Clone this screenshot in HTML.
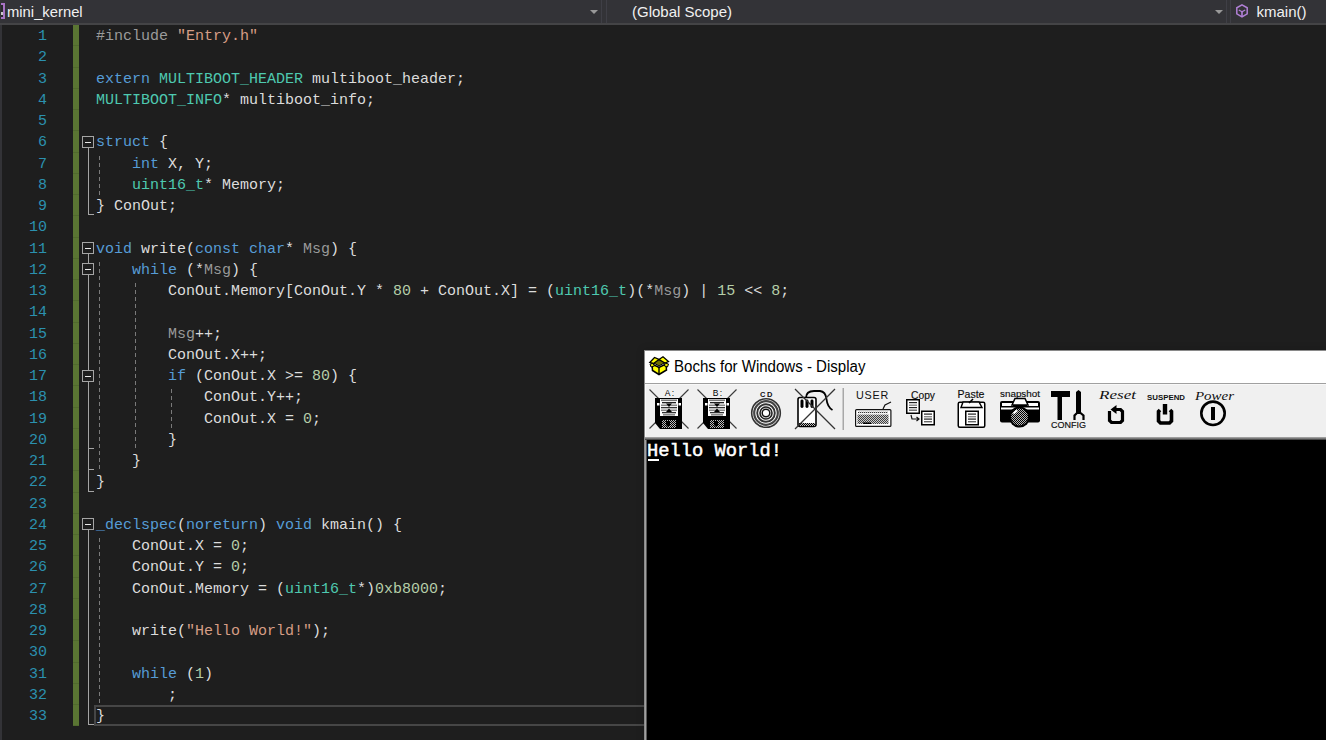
<!DOCTYPE html>
<html><head><meta charset="utf-8"><style>
*{margin:0;padding:0;box-sizing:border-box}
html,body{width:1326px;height:740px;overflow:hidden;background:#1e1e1e;position:relative}
.hdr{position:absolute;left:0;top:0;width:1326px;height:25px;background:#333337;border-bottom:2px solid #444446}
.dd{position:absolute;top:0;height:23px;border-right:1px solid #3f3f46;border-left:1px solid #3f3f46;font-family:"Liberation Sans",sans-serif;font-size:15px;color:#f1f1f1;line-height:23px;white-space:nowrap}
.arr{position:absolute;top:10px;width:0;height:0;border-left:4px solid transparent;border-right:4px solid transparent;border-top:4px solid #999}
.strip{position:absolute;left:0;top:25px;width:2px;height:715px;background:#333337}
.ln{position:absolute;left:0;width:47px;margin-top:1px;text-align:right;font-family:"Liberation Mono",monospace;font-size:15px;line-height:21.25px;color:#2b91af;white-space:pre}
.cl{position:absolute;left:96px;margin-top:1px;font-family:"Liberation Mono",monospace;font-size:15px;line-height:21.25px;color:#dcdcdc;white-space:pre}
.k{color:#569cd6}.t{color:#4ec9b0}.s{color:#d69d85}.n{color:#b5cea8}.p{color:#9a9a9a}.pp{color:#9b9b9b}
.gb{position:absolute;left:73px;width:6px;background:#5a7533;border-bottom:1px solid #516a2e}
.fb{position:absolute;z-index:2;left:82px;width:12px;height:12px;border:1px solid #a5a5a5;background:#1e1e1e}
.fb::after{content:"";position:absolute;left:2px;top:4.5px;width:6px;height:1.5px;background:#e8e8e8}
.ov{position:absolute;left:88px;width:1px;background:#a5a5a5}
.oh{position:absolute;left:88px;width:6px;height:1px;background:#a5a5a5}
.dg{position:absolute;width:1px;background:repeating-linear-gradient(to bottom,#7a7a7a 0 4px,transparent 4px 7px)}
.cur{position:absolute;left:94px;top:705px;width:600px;height:21px;border:2px solid #464646}
</style></head>
<body>

<div class="hdr"></div>
<div class="dd" style="left:-1px;width:603px"><span style="position:absolute;left:1px;top:3px;width:4px;height:16px;border:2px solid #a873c4;border-left:none;background:#2a2a2d"></span><span style="position:absolute;left:1px;top:12px;width:2px;height:3px;background:#c8c8c8"></span><span style="position:absolute;left:7px;top:1px;font-size:14.8px">mini_kernel</span><div class="arr" style="left:590px"></div></div>
<div class="dd" style="left:606px;width:621px"><span style="position:absolute;left:25px;top:0px">(Global Scope)</span><div class="arr" style="left:608px"></div></div>
<div class="dd" style="left:1230px;width:100px;border-right:none"><span style="position:absolute;left:25.5px;top:0px">kmain()</span><svg width="16" height="16" style="position:absolute;left:3.5px;top:3px" viewBox="0 0 16 16"><polygon points="7,1.8 12.2,4.8 12.2,10.8 7,13.8 1.8,10.8 1.8,4.8" fill="none" stroke="#b180d7" stroke-width="1.5"/><polyline points="3.8,7 7,8.8 10.2,7" fill="none" stroke="#b180d7" stroke-width="1.3"/><line x1="7" y1="8.6" x2="7" y2="13.5" stroke="#b180d7" stroke-width="1.6"/></svg></div>
<div class="strip"></div>

<div class="cur"></div>
<div class="ln" style="top:25.0px">1</div>
<div class="cl" style="top:25.0px"><span class="pp">#include</span> <span class="s">&quot;Entry.h&quot;</span></div>
<div class="ln" style="top:46.25px">2</div>
<div class="ln" style="top:67.5px">3</div>
<div class="cl" style="top:67.5px"><span class="k">extern</span> <span class="t">MULTIBOOT_HEADER</span> multiboot_header;</div>
<div class="ln" style="top:88.75px">4</div>
<div class="cl" style="top:88.75px"><span class="t">MULTIBOOT_INFO</span>* multiboot_info;</div>
<div class="ln" style="top:110.0px">5</div>
<div class="ln" style="top:131.25px">6</div>
<div class="cl" style="top:131.25px"><span class="k">struct</span> {</div>
<div class="ln" style="top:152.5px">7</div>
<div class="cl" style="top:152.5px">    <span class="k">int</span> X, Y;</div>
<div class="ln" style="top:173.75px">8</div>
<div class="cl" style="top:173.75px">    <span class="t">uint16_t</span>* Memory;</div>
<div class="ln" style="top:195.0px">9</div>
<div class="cl" style="top:195.0px">} ConOut;</div>
<div class="ln" style="top:216.25px">10</div>
<div class="ln" style="top:237.5px">11</div>
<div class="cl" style="top:237.5px"><span class="k">void</span> write(<span class="k">const</span> <span class="k">char</span>* <span class="p">Msg</span>) {</div>
<div class="ln" style="top:258.75px">12</div>
<div class="cl" style="top:258.75px">    <span class="k">while</span> (*<span class="p">Msg</span>) {</div>
<div class="ln" style="top:280.0px">13</div>
<div class="cl" style="top:280.0px">        ConOut.Memory[ConOut.Y * <span class="n">80</span> + ConOut.X] = (<span class="t">uint16_t</span>)(*<span class="p">Msg</span>) | <span class="n">15</span> &lt;&lt; <span class="n">8</span>;</div>
<div class="ln" style="top:301.25px">14</div>
<div class="ln" style="top:322.5px">15</div>
<div class="cl" style="top:322.5px">        <span class="p">Msg</span>++;</div>
<div class="ln" style="top:343.75px">16</div>
<div class="cl" style="top:343.75px">        ConOut.X++;</div>
<div class="ln" style="top:365.0px">17</div>
<div class="cl" style="top:365.0px">        <span class="k">if</span> (ConOut.X &gt;= <span class="n">80</span>) {</div>
<div class="ln" style="top:386.25px">18</div>
<div class="cl" style="top:386.25px">            ConOut.Y++;</div>
<div class="ln" style="top:407.5px">19</div>
<div class="cl" style="top:407.5px">            ConOut.X = <span class="n">0</span>;</div>
<div class="ln" style="top:428.75px">20</div>
<div class="cl" style="top:428.75px">        }</div>
<div class="ln" style="top:450.0px">21</div>
<div class="cl" style="top:450.0px">    }</div>
<div class="ln" style="top:471.25px">22</div>
<div class="cl" style="top:471.25px">}</div>
<div class="ln" style="top:492.5px">23</div>
<div class="ln" style="top:513.75px">24</div>
<div class="cl" style="top:513.75px"><span class="k">_declspec</span>(<span class="k">noreturn</span>) <span class="k">void</span> kmain() {</div>
<div class="ln" style="top:535.0px">25</div>
<div class="cl" style="top:535.0px">    ConOut.X = <span class="n">0</span>;</div>
<div class="ln" style="top:556.25px">26</div>
<div class="cl" style="top:556.25px">    ConOut.Y = <span class="n">0</span>;</div>
<div class="ln" style="top:577.5px">27</div>
<div class="cl" style="top:577.5px">    ConOut.Memory = (<span class="t">uint16_t</span>*)<span class="n">0xb8000</span>;</div>
<div class="ln" style="top:598.75px">28</div>
<div class="ln" style="top:620.0px">29</div>
<div class="cl" style="top:620.0px">    write(<span class="s">&quot;Hello World!&quot;</span>);</div>
<div class="ln" style="top:641.25px">30</div>
<div class="ln" style="top:662.5px">31</div>
<div class="cl" style="top:662.5px">    <span class="k">while</span> (<span class="n">1</span>)</div>
<div class="ln" style="top:683.75px">32</div>
<div class="cl" style="top:683.75px">        ;</div>
<div class="ln" style="top:705.0px">33</div>
<div class="cl" style="top:705.0px">}</div>
<div class="gb" style="top:25.0px;height:21.25px"></div>
<div class="gb" style="top:46.25px;height:21.25px"></div>
<div class="gb" style="top:67.5px;height:21.25px"></div>
<div class="gb" style="top:88.75px;height:21.25px"></div>
<div class="gb" style="top:110.0px;height:21.25px"></div>
<div class="gb" style="top:131.25px;height:21.25px"></div>
<div class="gb" style="top:152.5px;height:21.25px"></div>
<div class="gb" style="top:173.75px;height:21.25px"></div>
<div class="gb" style="top:195.0px;height:21.25px"></div>
<div class="gb" style="top:216.25px;height:21.25px"></div>
<div class="gb" style="top:237.5px;height:21.25px"></div>
<div class="gb" style="top:258.75px;height:21.25px"></div>
<div class="gb" style="top:280.0px;height:21.25px"></div>
<div class="gb" style="top:301.25px;height:21.25px"></div>
<div class="gb" style="top:322.5px;height:21.25px"></div>
<div class="gb" style="top:343.75px;height:21.25px"></div>
<div class="gb" style="top:365.0px;height:21.25px"></div>
<div class="gb" style="top:386.25px;height:21.25px"></div>
<div class="gb" style="top:407.5px;height:21.25px"></div>
<div class="gb" style="top:428.75px;height:21.25px"></div>
<div class="gb" style="top:450.0px;height:21.25px"></div>
<div class="gb" style="top:471.25px;height:21.25px"></div>
<div class="gb" style="top:492.5px;height:21.25px"></div>
<div class="gb" style="top:513.75px;height:21.25px"></div>
<div class="gb" style="top:535.0px;height:21.25px"></div>
<div class="gb" style="top:556.25px;height:21.25px"></div>
<div class="gb" style="top:577.5px;height:21.25px"></div>
<div class="gb" style="top:598.75px;height:21.25px"></div>
<div class="gb" style="top:620.0px;height:21.25px"></div>
<div class="gb" style="top:641.25px;height:21.25px"></div>
<div class="gb" style="top:662.5px;height:21.25px"></div>
<div class="gb" style="top:683.75px;height:21.25px"></div>
<div class="gb" style="top:705.0px;height:21.25px"></div>
<div class="fb" style="top:136px"></div>
<div class="fb" style="top:242px"></div>
<div class="fb" style="top:263px"></div>
<div class="fb" style="top:370px"></div>
<div class="fb" style="top:518px"></div>
<div class="ov" style="top:148px;height:67px"></div>
<div class="oh" style="top:214px"></div>
<div class="ov" style="top:254px;height:238px"></div>
<div class="oh" style="top:491px"></div>
<div class="ov" style="top:275px;height:195px"></div>
<div class="oh" style="top:469px"></div>
<div class="ov" style="top:382px;height:67px"></div>
<div class="oh" style="top:448px"></div>
<div class="ov" style="top:530px;height:195px"></div>
<div class="oh" style="top:724px"></div>
<div class="dg" style="left:99px;top:155.5px;height:39.5px"></div>
<div class="dg" style="left:99px;top:261.75px;height:209.5px"></div>
<div class="dg" style="left:135px;top:283.0px;height:167.0px"></div>
<div class="dg" style="left:171px;top:389.25px;height:39.5px"></div>
<div class="dg" style="left:99px;top:538.0px;height:167.0px"></div>

<div style="position:absolute;left:644px;top:350px;width:700px;height:400px;background:#fff;border-left:1px solid #8a8a8a;border-top:1px solid #8a8a8a;box-shadow:0 0 8px rgba(0,0,0,0.18)"></div>
<div style="position:absolute;left:674px;top:357px;font-family:'Liberation Sans',sans-serif;font-size:16px;line-height:20px;transform:scaleX(0.94);transform-origin:0 0;color:#000;white-space:nowrap">Bochs for Windows - Display</div>
<div style="position:absolute;left:645px;top:383px;width:690px;height:1px;background:#a0a0a0"></div>
<div style="position:absolute;left:645px;top:384px;width:690px;height:54px;background:#f0f0f0;border-top:1px solid #f8f8f8;border-left:1px solid #fbfbfb"></div>
<div style="position:absolute;left:645px;top:437px;width:690px;height:3px;background:linear-gradient(#b0b0b0,#707070 60%,#303030)"></div>
<div style="position:absolute;left:645px;top:440px;width:690px;height:310px;background:#000;border-left:1px solid #a0a0a0"></div>
<div style="position:absolute;left:646px;top:440px;width:1px;height:310px;background:#555"></div>
<div style="position:absolute;left:647px;top:441px;font-family:'Liberation Mono',monospace;font-size:18.75px;line-height:20px;color:#fff;-webkit-text-stroke:0.5px #fff;white-space:pre">Hello World!</div>
<div style="position:absolute;left:648px;top:459px;width:11px;height:2px;background:#fff"></div>
<svg width="1326" height="740" style="position:absolute;left:0;top:0"><defs><pattern id="chk" width="2" height="2" patternUnits="userSpaceOnUse"><rect width="1" height="1" fill="#000"/><rect x="1" y="1" width="1" height="1" fill="#000"/><rect x="1" y="0" width="1" height="1" fill="#bbb"/><rect x="0" y="1" width="1" height="1" fill="#bbb"/></pattern></defs><g transform="translate(649,356)"><polygon points="3,8 10,11.5 17,8 17.5,14 10,18.5 3.5,14.5" fill="#ffff00" stroke="#000" stroke-width="1.5"/><line x1="10" y1="11.5" x2="10" y2="18.5" stroke="#000" stroke-width="1.4"/><polygon points="4,6.5 10,3.5 16,6.5 10,10" fill="#6e6e00" stroke="#000" stroke-width="1"/><polygon points="0.8,6.5 5.5,1.5 10,3.5 4.5,7.5" fill="#ffff00" stroke="#000" stroke-width="1.3"/><polygon points="10,3.5 14,0.8 19.5,5.5 16,7" fill="#ffff00" stroke="#000" stroke-width="1.3"/><polygon points="1,8 4,7.5 5.5,10 2,11" fill="#e8e800" stroke="#000" stroke-width="1"/><polygon points="16,7 19.5,8 18.5,11 15.5,10" fill="#e8e800" stroke="#000" stroke-width="1"/></g><g transform="translate(649,389)"><line x1="0.5" y1="0.5" x2="39.5" y2="39.5" stroke="#3a3a3a" stroke-width="1.1"/><line x1="39.5" y1="0.5" x2="0.5" y2="39.5" stroke="#3a3a3a" stroke-width="1.1"/><polygon points="6,9 33,9 33,40 11,40 6,34" fill="#000"/><rect x="11" y="10" width="18" height="17" fill="#fff"/><rect x="12" y="10.5" width="16" height="1.6" fill="#777"/><rect x="13" y="13" width="14" height="1.3" fill="#222"/><rect x="12" y="15.5" width="16" height="1.6" fill="#888"/><rect x="12" y="18" width="16" height="1.3" fill="#333"/><rect x="12" y="20.5" width="16" height="1.6" fill="#888"/><rect x="13" y="23" width="14" height="1.3" fill="#333"/><rect x="14" y="25" width="12" height="1.6" fill="#888"/><polygon points="17,14.5 23,14.5 20,18" fill="#000"/><polygon points="17,23 23,23 20,19.5" fill="#000"/><rect x="8" y="14" width="2.5" height="2.5" fill="#fff"/><rect x="29.5" y="14" width="2.5" height="2.5" fill="#fff"/><rect x="13" y="31" width="14" height="8" fill="url(#chk)"/><polygon points="17,32 21,32 21,36 19,38 17,36" fill="#000"/><text x="21" y="7.3" font-family="Liberation Sans" font-size="8.5" text-anchor="middle" fill="#000" letter-spacing="1.2">A:</text></g><g transform="translate(697,389)"><line x1="0.5" y1="0.5" x2="39.5" y2="39.5" stroke="#3a3a3a" stroke-width="1.1"/><line x1="39.5" y1="0.5" x2="0.5" y2="39.5" stroke="#3a3a3a" stroke-width="1.1"/><polygon points="6,9 33,9 33,40 11,40 6,34" fill="#000"/><rect x="11" y="10" width="18" height="17" fill="#fff"/><rect x="12" y="10.5" width="16" height="1.6" fill="#777"/><rect x="13" y="13" width="14" height="1.3" fill="#222"/><rect x="12" y="15.5" width="16" height="1.6" fill="#888"/><rect x="12" y="18" width="16" height="1.3" fill="#333"/><rect x="12" y="20.5" width="16" height="1.6" fill="#888"/><rect x="13" y="23" width="14" height="1.3" fill="#333"/><rect x="14" y="25" width="12" height="1.6" fill="#888"/><polygon points="17,14.5 23,14.5 20,18" fill="#000"/><polygon points="17,23 23,23 20,19.5" fill="#000"/><rect x="8" y="14" width="2.5" height="2.5" fill="#fff"/><rect x="29.5" y="14" width="2.5" height="2.5" fill="#fff"/><rect x="13" y="31" width="14" height="8" fill="url(#chk)"/><polygon points="17,32 21,32 21,36 19,38 17,36" fill="#000"/><text x="21" y="7.3" font-family="Liberation Sans" font-size="8.5" text-anchor="middle" fill="#000" letter-spacing="1.2">B:</text></g><text x="767" y="396.5" font-family="Liberation Sans" font-weight="bold" font-size="7.5" text-anchor="middle" fill="#111" letter-spacing="1.5">CD</text><circle cx="766" cy="413" r="14.3" fill="#fff" stroke="#333" stroke-width="1.6"/><circle cx="766" cy="413" r="11.8" fill="none" stroke="#444" stroke-width="2.2"/><circle cx="766" cy="413" r="8.8" fill="none" stroke="#333" stroke-width="1.9"/><circle cx="766" cy="413" r="6" fill="none" stroke="#222" stroke-width="1.6"/><circle cx="766" cy="413" r="3.8" fill="#fff" stroke="#111" stroke-width="1.5"/><g><path d="M806,398 C806,393 809,391 814,391 L820,391 C824,391.5 826,395 826.5,399 C827,404 829,408 832.5,410" fill="none" stroke="#000" stroke-width="1.8"/><rect x="798" y="397.5" width="18" height="29" rx="2" fill="#fff" stroke="#000" stroke-width="1.6"/><rect x="800.5" y="399.5" width="3" height="8.5" rx="1.4" fill="#000"/><rect x="805.5" y="399.5" width="3" height="8.5" rx="1.4" fill="#000"/><rect x="810.5" y="399.5" width="3" height="8.5" rx="1.4" fill="#000"/><rect x="799" y="423" width="16" height="3" fill="url(#chk)"/><line x1="795" y1="389" x2="835" y2="429" stroke="#333" stroke-width="1.2"/><line x1="835" y1="389" x2="795" y2="429" stroke="#333" stroke-width="1.2"/></g><rect x="842.5" y="388" width="1.5" height="42" fill="#a8a8a8"/><text x="872.5" y="399" font-family="Liberation Sans" font-size="11.5" text-anchor="middle" fill="#111" letter-spacing="0.8" textLength="33" lengthAdjust="spacingAndGlyphs">USER</text><path d="M883,409 L885,405 L888,403.5 L891,402" fill="none" stroke="#111" stroke-width="1.2"/><rect x="855.6" y="409.6" width="35.3" height="16.8" rx="1" fill="#fff" stroke="#111" stroke-width="1.2"/><rect x="858" y="411.8" width="30" height="1.3" fill="url(#chk)" opacity="0.8"/><rect x="857.5" y="414.5" width="31" height="9.5" fill="url(#chk)" opacity="0.75"/><rect x="863" y="422.5" width="8" height="1.5" fill="#000"/><text x="923" y="398.5" font-family="Liberation Sans" font-size="10.5" stroke="#000" stroke-width="0.15" text-anchor="middle" fill="#111" textLength="24" lengthAdjust="spacingAndGlyphs">Copy</text><rect x="906.75" y="399.75" width="12.5" height="13.5" fill="#fff" stroke="#000" stroke-width="1.5"/><rect x="909" y="402" width="8" height="1.2" fill="#222"/><rect x="909" y="404.5" width="8" height="1.4" fill="#888"/><rect x="909" y="407" width="8" height="1.2" fill="#222"/><rect x="909" y="409.5" width="8" height="1.4" fill="#666"/><rect x="921.75" y="411.25" width="12.5" height="13.5" fill="#fff" stroke="#000" stroke-width="1.5"/><rect x="924" y="413.5" width="8" height="1.2" fill="#222"/><rect x="924" y="416.0" width="8" height="1.4" fill="#888"/><rect x="924" y="418.5" width="8" height="1.2" fill="#222"/><rect x="924" y="421.0" width="8" height="1.4" fill="#666"/><path d="M911,415 L912,419 L919,419 M916.5,417 L919,419 L916.5,421" fill="none" stroke="#111" stroke-width="1.2"/><text x="971" y="397.5" font-family="Liberation Sans" font-size="10" stroke="#000" stroke-width="0.15" text-anchor="middle" fill="#111" textLength="27" lengthAdjust="spacingAndGlyphs">Paste</text><rect x="958.25" y="402.25" width="26.5" height="25" rx="1.5" fill="#fff" stroke="#000" stroke-width="1.5"/><polygon points="961,407.5 963,402 979,402 982,407.5" fill="#fff" stroke="#000" stroke-width="1.4"/><line x1="969" y1="403" x2="973" y2="399" stroke="#000" stroke-width="1.6"/><rect x="965.75" y="411.25" width="12.5" height="13.5" fill="#fff" stroke="#000" stroke-width="1.5"/><rect x="968" y="413.5" width="8" height="1.2" fill="#222"/><rect x="968" y="416.0" width="8" height="1.4" fill="#888"/><rect x="968" y="418.5" width="8" height="1.2" fill="#222"/><rect x="968" y="421.0" width="8" height="1.4" fill="#666"/><text x="1020" y="396.5" font-family="Liberation Sans" font-size="9.5" stroke="#000" stroke-width="0.15" text-anchor="middle" fill="#111" textLength="40" lengthAdjust="spacingAndGlyphs">snapshot</text><rect x="1000" y="401" width="40" height="21.5" rx="2" fill="#000"/><rect x="1002" y="403" width="11" height="3" fill="#fff"/><rect x="1027" y="403" width="11" height="3" fill="#fff"/><rect x="1001" y="407.5" width="38" height="2" fill="#fff"/><polygon points="1012,405 1015,398.5 1025,398.5 1028,405" fill="#fff" stroke="#000" stroke-width="1.5"/><circle cx="1019.5" cy="417" r="10.5" fill="#000"/><circle cx="1019.5" cy="417" r="8.5" fill="url(#chk)"/><line x1="1013.5" y1="413.5" x2="1017" y2="410.5" stroke="#fff" stroke-width="2.2"/><polygon points="1051,391 1070,391 1070,397 1062,397 1062,420 1057.5,420 1057.5,397 1051,397" fill="#000"/><path d="M1076,414 L1076,392 L1078.5,390 L1081,392 L1081,414 Z" fill="#000"/><path d="M1074.5,420 L1074.5,415.5 L1077,413 L1080.5,413 L1083.5,415.5 L1083.5,420" fill="none" stroke="#000" stroke-width="2.2"/><text x="1068.5" y="428" font-family="Liberation Sans" font-size="8.5" stroke="#000" stroke-width="0.15" text-anchor="middle" fill="#111" textLength="35" lengthAdjust="spacingAndGlyphs">CONFIG</text><text x="1117.5" y="399" font-family="Liberation Serif" font-style="italic" font-size="12.5" text-anchor="middle" fill="#111" textLength="37" lengthAdjust="spacingAndGlyphs">Reset</text><path d="M1109.5,411 L1109.5,420.5 L1111.5,422.5 L1120.5,422.5 L1122.5,420.5 L1122.5,411.5 L1120.5,409.5 L1114.5,409.5" fill="none" stroke="#000" stroke-width="3.2"/><polygon points="1110.5,409.5 1116.5,405 1116.5,414" fill="#000"/><text x="1166" y="399.8" font-family="Liberation Sans" font-weight="bold" font-size="8" text-anchor="middle" fill="#111" textLength="38" lengthAdjust="spacingAndGlyphs">SUSPEND</text><path d="M1160,410 L1158.5,411.5 L1158.5,421 L1160.5,423 L1169.5,423 L1171.5,421 L1171.5,411.5 L1170,410" fill="none" stroke="#000" stroke-width="3.6"/><rect x="1162.8" y="404" width="4.4" height="10.5" fill="#000"/><text x="1214.5" y="399.5" font-family="Liberation Serif" font-style="italic" font-size="12.5" text-anchor="middle" fill="#111" textLength="39" lengthAdjust="spacingAndGlyphs">Power</text><circle cx="1213" cy="413.3" r="11.7" fill="none" stroke="#000" stroke-width="2.6"/><rect x="1211" y="407" width="4" height="13" fill="#000"/></svg>
</body></html>
